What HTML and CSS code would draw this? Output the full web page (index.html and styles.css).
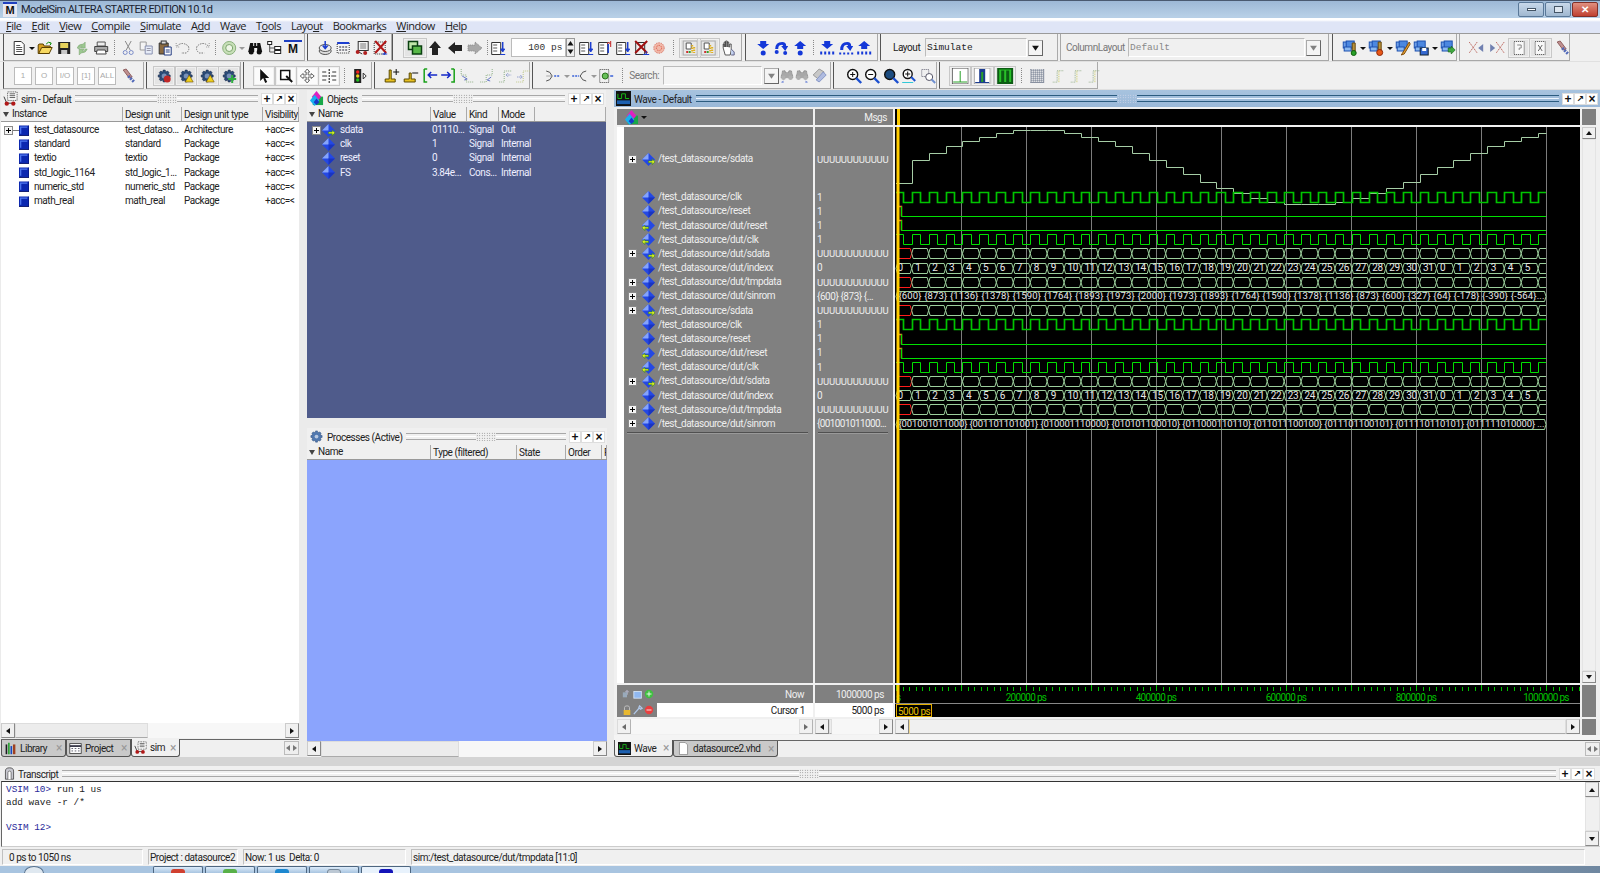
FILE: index.html
```html
<!DOCTYPE html>
<html lang="en">
<head>
<meta charset="utf-8">
<title>ModelSim ALTERA STARTER EDITION 10.1d</title>
<link rel="stylesheet" href="styles.css">
</head>
<body>
<svg class="defs" aria-hidden="true">
<symbol id="doc" viewBox="0 0 16 16"><path d="M3 1.5h7l3 3v10H3z" fill="#fff" stroke="#333"/><path d="M5 5.5h4M5 7.5h6M5 9.5h6M5 11.5h6" stroke="#555"/></symbol>
<symbol id="open" viewBox="0 0 16 16"><path d="M1 5V13.500h11l1-6V6H7L6 4H2z" fill="#d8a020" stroke="#5a4000"/><path d="M1.500 13.500l3-6H15l-3 6z" fill="#f6d860" stroke="#5a4000"/><path d="M9 4q2-3 5-1l-1 2" fill="none" stroke="#080"/></symbol>
<symbol id="save" viewBox="0 0 16 16"><rect x="2" y="2" width="12" height="12" fill="#222"/><rect x="4" y="3" width="8" height="5" fill="#e6d25c"/><rect x="5" y="10" width="6" height="4" fill="#c8c8c8"/></symbol>
<symbol id="reload" viewBox="0 0 16 16"><path d="M3 8q1-4 6-4l2-2v6H6l2-2q-3 0-3 3zM13 9q-1 4-6 4l-2 2V9h5l-2 2q3 0 3-2z" fill="#9cc890" stroke="#7aa070" stroke-width=".5"/></symbol>
<symbol id="print" viewBox="0 0 16 16"><path d="M4 2h8v4H4z" fill="#eee" stroke="#555"/><path d="M1.500 6.500h13v5h-13z" fill="#aaa" stroke="#444"/><path d="M4 10h8l1 4H3z" fill="#fff" stroke="#444"/></symbol>
<symbol id="cut" viewBox="0 0 16 16"><path d="M5 1l5 9M11 1L6 10" stroke="#8a8a8a" fill="none"/><circle cx="5" cy="12.500" r="2" fill="none" stroke="#7a8cc8"/><circle cx="11" cy="12.500" r="2" fill="none" stroke="#7a8cc8"/></symbol>
<symbol id="copy" viewBox="0 0 16 16"><path d="M2 2h6v8H2z" fill="#f4f4f4" stroke="#9a9a9a"/><path d="M7 6h7v8H7z" fill="#e6ecf8" stroke="#8890b0"/><path d="M8.500 8.500h4M8.500 10.500h4" stroke="#99a"/></symbol>
<symbol id="paste" viewBox="0 0 16 16"><path d="M2 3h9v11H2z" fill="#8a6a40" stroke="#333"/><rect x="4" y="1" width="5" height="3" fill="#ddd" stroke="#333"/><path d="M7 7h7v8H7z" fill="#fff" stroke="#223a80"/><path d="M8.500 10h4M8.500 12h4" stroke="#223a80"/></symbol>
<symbol id="undo" viewBox="0 0 16 16"><path d="M2 6q5-5 11 0 2 4-2 7H6" fill="none" stroke="#777" stroke-dasharray="1.500 1"/><path d="M1 3v4h4" fill="none" stroke="#999" stroke-dasharray="1 1"/></symbol>
<symbol id="redo" viewBox="0 0 16 16"><path d="M14 6Q9 1 3 6q-2 4 2 7h5" fill="none" stroke="#777" stroke-dasharray="1.500 1"/><path d="M15 3v4h-4" fill="none" stroke="#999" stroke-dasharray="1 1"/></symbol>
<symbol id="go" viewBox="0 0 16 16"><circle cx="8" cy="8" r="6.500" fill="#c8e0b8" stroke="#8ab07c"/><circle cx="8" cy="8" r="3.500" fill="#eef6e6" stroke="#7ca46c"/></symbol>
<symbol id="bino" viewBox="0 0 16 16"><path d="M3 3h3v3l1 0V3h2v3l1 0V3h3l2 9h-5V8H7v4H1z" fill="#111"/><circle cx="4" cy="12" r="2.500" fill="#111"/><circle cx="12" cy="12" r="2.500" fill="#111"/></symbol>
<symbol id="tree" viewBox="0 0 16 16"><path d="M3.500 4v8h5M3.500 8h5" fill="none" stroke="#555"/><rect x="1.500" y="1.500" width="4" height="3" fill="#fff" stroke="#222"/><rect x="8.500" y="6.500" width="6" height="3" fill="#fff" stroke="#222"/><rect x="8.500" y="10.500" width="6" height="3" fill="#fff" stroke="#222"/></symbol>
<symbol id="cdisk" viewBox="0 0 16 16"><ellipse cx="8" cy="11" rx="6" ry="3.500" fill="#ddd" stroke="#555"/><ellipse cx="8" cy="8" rx="6" ry="3.500" fill="#eee" stroke="#555"/><path d="M8 1v7M5.500 5.500L8 8.500l2.500-3" fill="none" stroke="#1c3ed0" stroke-width="1.500"/></symbol>
<symbol id="cgrid" viewBox="0 0 16 16"><rect x="2" y="3" width="12" height="10" fill="#f4f4f4" stroke="#333" stroke-dasharray="1 1"/><path d="M2 3h12" stroke="#1c3ed0" stroke-width="2"/><path d="M4 7h2M7 7h2M10 7h2M4 10h2M7 10h2M10 10h2" stroke="#223"/></symbol>
<symbol id="cnode" viewBox="0 0 16 16"><rect x="4" y="1.500" width="10" height="9" fill="#f4f4f4" stroke="#333"/><path d="M6 4h6M6 6h6M6 8h6" stroke="#777"/><path d="M3 11L8 14" stroke="#333"/><circle cx="3.500" cy="12" r="2" fill="#b02020"/><circle cx="11" cy="13" r="2" fill="#b02020"/></symbol>
<symbol id="cx" viewBox="0 0 16 16"><rect x="2" y="2" width="11" height="12" fill="#f0f0f0" stroke="#333" stroke-dasharray="1 1"/><path d="M3 1l11 12M14 1L3 13" stroke="#b01818" stroke-width="2"/><path d="M10 14h5M12.500 12v3" stroke="#1c3ed0"/></symbol>
<symbol id="sqs" viewBox="0 0 16 16"><rect x="1.500" y="1.500" width="9" height="8" fill="#bfe6a8" stroke="#0a4010" stroke-width="1.500"/><rect x="5.500" y="6" width="9" height="8" fill="#58b848" stroke="#0a4010" stroke-width="1.500"/></symbol>
<symbol id="up" viewBox="0 0 16 16"><path d="M8 1l6 7h-3v7H5V8H2z" fill="#222"/></symbol>
<symbol id="left" viewBox="0 0 16 16"><path d="M1 8l7-6v3h7v6H8v3z" fill="#222"/></symbol>
<symbol id="right" viewBox="0 0 16 16"><path d="M15 8L8 2v3H1v6h7v3z" fill="#a8a8a8" stroke="#888" stroke-dasharray="1 1"/></symbol>
<symbol id="rundoc" viewBox="0 0 16 16"><path d="M1.500 2.500h9v12h-9z" fill="#fff" stroke="#333"/><path d="M3 5h4M3 8h4M3 11h4" stroke="#555"/><path d="M12.500 2v9" stroke="#1c3ed0" stroke-width="1.500"/><path d="M10.500 9l2 3 2-3z" fill="#1c3ed0" stroke="#1c3ed0"/><path d="M10 14.500h5" stroke="#1c3ed0"/></symbol>
<symbol id="rundocr" viewBox="0 0 16 16"><path d="M1.500 2.500h9v12h-9z" fill="#fff" stroke="#333"/><path d="M3 5h4M3 8h4M3 11h4" stroke="#555"/><path d="M11 4v9" stroke="#1c3ed0" stroke-width="1.500"/><path d="M13.500 1v6" stroke="#c02020"/><path d="M10 4l1.500-2 1.500 2" stroke="#c02020" fill="none"/></symbol>
<symbol id="rundocx" viewBox="0 0 16 16"><path d="M1.500 2.500h9v12h-9z" fill="#eee" stroke="#333"/><path d="M1 1l12 12M13 1L1 13" stroke="#a01010" stroke-width="2"/><path d="M9 14.500h6M12 11v3" stroke="#1c3ed0"/></symbol>
<symbol id="break" viewBox="0 0 16 16"><circle cx="8" cy="8" r="6" fill="#f0b8a8" stroke="#d05848" stroke-dasharray="1 1"/><circle cx="8" cy="8" r="3" fill="none" stroke="#d84030" stroke-dasharray="1 1"/></symbol>
<symbol id="perf" viewBox="0 0 16 16"><rect x="1" y="1" width="14" height="14" fill="#e8e8e8" stroke="#aaa"/><path d="M4 3h5v6H4z" fill="#fff" stroke="#555"/><path d="M10 5v8M12 7v6" stroke="#e0b020" stroke-width="2" stroke-dasharray="1.500 1"/><path d="M5 11v2" stroke="#d03030" stroke-width="2"/><path d="M7.500 11v2" stroke="#30a030" stroke-width="2"/></symbol>
<symbol id="hand" viewBox="0 0 16 16"><path d="M4 8V4h1v3-5h1.500v5-6H8v6-5h1.500v5l1 0V4H12v6l-1 5H6z" fill="#fff" stroke="#333" stroke-width=".8"/><path d="M12 9l3 3v3h-3" fill="#c0d0f0" stroke="#668"/></symbol>
<symbol id="stepin" viewBox="0 0 16 16"><path d="M5 1h6v3h3L8 9 2 4h3z" fill="#1438d8"/><circle cx="8" cy="13" r="2.500" fill="#1438d8"/></symbol>
<symbol id="stepov" viewBox="0 0 16 16"><path d="M2 9q0-7 7-7 4 0 4 4h2l-3 5-4-5h2q-1-2-2-1-3 0-3 4z" fill="#1438d8"/><circle cx="3.500" cy="12" r="2" fill="#1438d8"/><circle cx="12" cy="13" r="2" fill="#1438d8"/></symbol>
<symbol id="stepou" viewBox="0 0 16 16"><path d="M8 1l6 5h-3v3H5V6H2z" fill="#1438d8"/><circle cx="8" cy="13" r="2.500" fill="#1438d8"/></symbol>
<symbol id="stepind" viewBox="0 0 16 16"><path d="M5 1h6v3h3L8 9 2 4h3z" fill="#1438d8"/><path d="M1 11.500h2v3H1zM5 11.500h2v3H5zM9 11.500h2v3H9zM13 11.500h2v3h-2z" fill="#1438d8"/></symbol>
<symbol id="stepovd" viewBox="0 0 16 16"><path d="M2 10q0-8 7-8 4 0 4 4h2l-3 5-4-5h2q-1-2-2-1-3 0-3 5z" fill="#1438d8"/><path d="M1 12.500h2v2H1zM5 12.500h2v2H5zM9 12.500h2v2H9zM13 12.500h2v2h-2z" fill="#1438d8"/></symbol>
<symbol id="stepoud" viewBox="0 0 16 16"><path d="M8 1l6 5h-3v3H5V6H2z" fill="#1438d8"/><path d="M1 11.500h2v3H1zM5 11.500h2v3H5zM9 11.500h2v3H9zM13 11.500h2v3h-2z" fill="#1438d8"/></symbol>
<symbol id="la" viewBox="0 0 16 16"><rect x="1" y="2" width="8" height="6" fill="#6ea0e8" stroke="#1c50b0"/><rect x="4" y="1" width="8" height="7" fill="#4c88e0" stroke="#1c50b0"/><rect x="2" y="7" width="7" height="4" fill="#8ab8f0" stroke="#1c50b0"/></symbol>
<symbol id="lay1" viewBox="0 0 16 16"><use href="#la"/><path d="M10 3h3v8h-3z" fill="#b8923a" stroke="#6a4a10"/><circle cx="11.500" cy="13" r="2.500" fill="#28a028" stroke="#106010"/></symbol>
<symbol id="lay2" viewBox="0 0 16 16"><use href="#la"/><path d="M10 2h3v8h-3z" fill="#b8923a" stroke="#6a4a10"/><circle cx="11.500" cy="12.500" r="3" fill="#e85818" stroke="#902808"/></symbol>
<symbol id="lay3" viewBox="0 0 16 16"><use href="#la"/><path d="M14 2L8 12l-2 3 3-1 6-10z" fill="#e8a030" stroke="#805010"/></symbol>
<symbol id="lay4" viewBox="0 0 16 16"><use href="#la"/><rect x="7" y="8" width="8" height="7" fill="#3468d0" stroke="#123"/><rect x="9" y="8" width="4" height="3" fill="#fff"/></symbol>
<symbol id="lay5" viewBox="0 0 16 16"><use href="#la"/><path d="M8 8h3V6l4 4-4 4v-2H8z" fill="#40a840" stroke="#106010" stroke-width=".6"/></symbol>
<symbol id="xl" viewBox="0 0 16 16"><path d="M1 2l8 11M9 2L1 13" stroke="#c07068" stroke-dasharray="1.500 .6"/><path d="M15 4l-5 4 5 4z" fill="#7080b0"/></symbol>
<symbol id="xr" viewBox="0 0 16 16"><path d="M7 2l8 11M15 2L7 13" stroke="#c07068" stroke-dasharray="1.500 .6"/><path d="M1 4l5 4-5 4z" fill="#7080b0"/></symbol>
<symbol id="dotbox" viewBox="0 0 16 16"><rect x="3" y="1.500" width="10" height="13" fill="#f8f8f8" stroke="#444" stroke-dasharray="1 1"/><path d="M6 5h4v3H8v2" fill="none" stroke="#888"/></symbol>
<symbol id="dotboxx" viewBox="0 0 16 16"><rect x="3" y="1.500" width="10" height="13" fill="#f8f8f8" stroke="#444" stroke-dasharray="1 1"/><path d="M6 5l4 6M10 5l-4 6" stroke="#666"/></symbol>
<symbol id="pen" viewBox="0 0 16 16"><path d="M3 2l6 8 3-1-6-8z" fill="#c09090" stroke="#906060"/><path d="M8 8l6 6" stroke="#5068b8" stroke-width="3" stroke-dasharray="2 1"/></symbol>
<symbol id="gear" viewBox="0 0 16 16"><path d="M7 0h2l.5 2 2-.9 1.400 1.400-.9 2 2 .5v2l-2 .5.900 2-1.400 1.400-2-.9L9 12H7l-.5-2-2 .9-1.400-1.400.9-2-2-.5v-2l2-.5-.9-2 1.400-1.400 2 .9z" transform="translate(0 2)" fill="#2c4c78" stroke="#102040" stroke-width=".5"/><circle cx="8" cy="8" r="2.500" fill="#7890b8"/></symbol>
<symbol id="gearr" viewBox="0 0 16 16"><use href="#gear"/><circle cx="11" cy="11" r="3.500" fill="#c02828"/></symbol>
<symbol id="geary" viewBox="0 0 16 16"><use href="#gear"/><path d="M11 7l4 7H7z" fill="#f0d020" stroke="#705000" stroke-width=".6"/></symbol>
<symbol id="gearg" viewBox="0 0 16 16"><use href="#gear"/><path d="M12 7v3h3v2h-3v3h-2v-3H7v-2h3V7z" fill="#30b040"/></symbol>
<symbol id="ptr" viewBox="0 0 16 16"><path d="M4 1v12l3-3 2 5 2-1-2-4h4z" fill="#111"/></symbol>
<symbol id="zbox" viewBox="0 0 16 16"><rect x="2.500" y="2.500" width="9" height="9" fill="#fff" stroke="#111" stroke-width="1.500"/><path d="M8 8l6 6" stroke="#111" stroke-width="2"/></symbol>
<symbol id="mv" viewBox="0 0 16 16"><path d="M8 1l2.500 3H9v3h3V5.500L15 8l-3 2.500V9H9v3h1.500L8 15l-2.500-3H7V9H4v1.500L1 8l3-2.500V7h3V4H5.500z" fill="#fff" stroke="#666"/></symbol>
<symbol id="spl" viewBox="0 0 16 16"><path d="M8 1v14" stroke="#111" stroke-dasharray="2 1"/><path d="M1 4h4M1 8h5M1 12h4M11 4h4M10 8h5M11 12h4" stroke="#333"/></symbol>
<symbol id="light" viewBox="0 0 16 16"><rect x="2" y="1" width="7" height="14" fill="#222"/><circle cx="5.500" cy="4" r="1.700" fill="#f02020"/><circle cx="5.500" cy="8" r="1.700" fill="#f0d020"/><circle cx="5.500" cy="12" r="1.700" fill="#20c020"/><path d="M11 5l3 3-3 3z" fill="#fff" stroke="#333"/></symbol>
<symbol id="yc1" viewBox="0 0 16 16"><path d="M1 14h10v-3H7V2H5v9H1z" fill="#e8c020" stroke="#5a4a00"/><path d="M12 1v6M9 4h6" stroke="#111"/></symbol>
<symbol id="yc2" viewBox="0 0 16 16"><path d="M1 14h11v-3H8V5H6v6H1z" fill="#e8c020" stroke="#5a4a00"/><path d="M9 5h6" stroke="#111"/></symbol>
<symbol id="gbl" viewBox="0 0 16 16"><path d="M2 1v13h3M2 1h3" fill="none" stroke="#18a018" stroke-width="1.500"/><path d="M6 7h9M9 4L6 7l3 3" fill="none" stroke="#1428c8" stroke-width="1.500"/></symbol>
<symbol id="gbr" viewBox="0 0 16 16"><path d="M14 1v13h-3M14 1h-3" fill="none" stroke="#18a018" stroke-width="1.500"/><path d="M1 7h9M7 4l3 3-3 3" fill="none" stroke="#1428c8" stroke-width="1.500"/></symbol>
<symbol id="ed1" viewBox="0 0 16 16"><path d="M2 1v6h5v7h7" fill="none" stroke="#90b088" stroke-dasharray="1 1"/><path d="M3 8l5 3-3 1" fill="none" stroke="#6878c8"/></symbol>
<symbol id="ed2" viewBox="0 0 16 16"><path d="M2 14h6V7h6V1" fill="none" stroke="#90b088" stroke-dasharray="1 1"/><path d="M13 9l-4 3 3 1" fill="none" stroke="#6878c8"/></symbol>
<symbol id="ed3" viewBox="0 0 16 16"><path d="M2 14h5V3h7" fill="none" stroke="#90b088" stroke-dasharray="1 1"/><path d="M9 7h5M11 5l-2 2 2 2" fill="none" stroke="#8090c8" stroke-dasharray="1 .6"/></symbol>
<symbol id="ed4" viewBox="0 0 16 16"><path d="M1 14h7V3h7" fill="none" stroke="#c0c888" stroke-dasharray="1 1"/><path d="M2 9h5M5 7l2 2-2 2" fill="none" stroke="#8090c8" stroke-dasharray="1 .6"/></symbol>
<symbol id="mrg1" viewBox="0 0 16 16"><path d="M1 3q4 0 6 5-2 5-6 5" fill="none" stroke="#555"/><path d="M1 8h5" stroke="#aaa"/><path d="M9 8h6" stroke="#3860d8" stroke-width="1.500" stroke-dasharray="2 1"/></symbol>
<symbol id="mrg2" viewBox="0 0 16 16"><path d="M15 3q-4 0-6 5 2 5 6 5" fill="none" stroke="#555"/><path d="M1 8h7" stroke="#3860d8" stroke-width="1.500" stroke-dasharray="2 1"/></symbol>
<symbol id="mrg3" viewBox="0 0 16 16"><rect x="1.500" y="1.500" width="9" height="13" fill="none" stroke="#444" stroke-dasharray="1 1"/><circle cx="7" cy="8" r="3" fill="#68c058" stroke="#287018"/><path d="M12 8h3" stroke="#3860d8" stroke-width="1.500"/></symbol>
<symbol id="fnd1" viewBox="0 0 16 16"><path d="M3 2h3v2h4V2h3l2 8H1z" fill="#a8a8a8" stroke="#888" stroke-dasharray="1 .6"/><circle cx="4" cy="10" r="2.500" fill="#b0b0b0"/><circle cx="12" cy="10" r="2.500" fill="#b0b0b0"/><path d="M1 15l3-2v3z" fill="#7088d8"/></symbol>
<symbol id="fnd2" viewBox="0 0 16 16"><path d="M3 2h3v2h4V2h3l2 8H1z" fill="#a8a8a8" stroke="#888" stroke-dasharray="1 .6"/><circle cx="4" cy="10" r="2.500" fill="#b0b0b0"/><circle cx="12" cy="10" r="2.500" fill="#b0b0b0"/><path d="M15 15l-3-2v3z" fill="#7088d8"/></symbol>
<symbol id="fnd3" viewBox="0 0 16 16"><path d="M2 7l6-6 5 3-6 7z" fill="#c8c8c8" stroke="#999"/><path d="M5 12l7-8 3 3-7 7z" fill="#b0bce0" stroke="#8898c8"/></symbol>
<symbol id="zin" viewBox="0 0 16 16"><circle cx="6.500" cy="6.500" r="5" fill="#fff" stroke="#111" stroke-width="1.400"/><path d="M4 6.500h5M6.500 4v5" stroke="#111"/><path d="M10 10l5 5" stroke="#1c50d0" stroke-width="2.400"/></symbol>
<symbol id="zout" viewBox="0 0 16 16"><circle cx="6.500" cy="6.500" r="5" fill="#fff" stroke="#111" stroke-width="1.400"/><path d="M4 6.500h5" stroke="#111"/><path d="M10 10l5 5" stroke="#1c50d0" stroke-width="2.400"/></symbol>
<symbol id="zfull" viewBox="0 0 16 16"><circle cx="6.500" cy="6.500" r="5" fill="#1c4c80" stroke="#111" stroke-width="1.400"/><path d="M10 10l5 5" stroke="#1c50d0" stroke-width="2.400"/></symbol>
<symbol id="zcur" viewBox="0 0 16 16"><circle cx="6.500" cy="6" r="4.500" fill="#fff" stroke="#111" stroke-width="1.400"/><path d="M4 6h5M6.500 3.500v5" stroke="#111"/><path d="M10 9l4 4" stroke="#1c50d0" stroke-width="2"/><path d="M1 14.500h11" stroke="#30c8d8"/></symbol>
<symbol id="zsel" viewBox="0 0 16 16"><rect x="1.500" y="1.500" width="7" height="7" fill="none" stroke="#667" stroke-dasharray="1 1"/><circle cx="9" cy="9" r="3.500" fill="#fff" stroke="#556"/><path d="M11.500 11.500l3.500 3.500" stroke="#7090d0" stroke-width="2"/></symbol>
<symbol id="v1" viewBox="0 0 16 16"><rect x="0" y="0" width="16" height="16" fill="#fff" stroke="#444"/><path d="M8 3v11M1 14h14" stroke="#28a028"/></symbol>
<symbol id="v2" viewBox="0 0 16 16"><rect x="0" y="0" width="16" height="16" fill="#fff" stroke="#999"/><rect x="5" y="1" width="6" height="13" fill="#1c3c90"/><rect x="7" y="4" width="2" height="10" fill="#28a028"/><path d="M1 14.500h14" stroke="#1c3c90"/></symbol>
<symbol id="v3" viewBox="0 0 16 16"><rect x="0" y="0" width="16" height="16" fill="#0c5c14"/><path d="M3 2v12M8 2v12M13 2v12" stroke="#28c028" stroke-width="2"/><path d="M2 2h12" stroke="#28c028"/></symbol>
<symbol id="hatch" viewBox="0 0 16 16"><rect x="1" y="1" width="14" height="14" fill="#8890a0"/><path d="M1 3h14M1 5h14M1 7h14M1 9h14M1 11h14M1 13h14M3 1v14M5 1v14M7 1v14M9 1v14M11 1v14M13 1v14" stroke="#f0f0f0" stroke-dasharray="1 1"/></symbol>
<symbol id="edgd" viewBox="0 0 16 16"><path d="M2 15h5V2h7" fill="none" stroke="#8aa880" stroke-dasharray="1 1"/><path d="M9 2v13" stroke="#c8c850" stroke-dasharray="1 1"/></symbol>
<symbol id="plus" viewBox="0 0 9 9"><rect x=".5" y=".5" width="8" height="8" fill="#f4f4f4" stroke="#8a8a8a"/><path d="M2 4.500h5M4.500 2v5" stroke="#000"/></symbol>
<symbol id="dia" viewBox="0 0 14 14"><path d="M7 0l7 7-7 7-7-7z" fill="#2448e4"/><path d="M7 0L0 7h7z" fill="#86a4fa"/><path d="M7 14l7-7H7z" fill="#1a34c0"/></symbol>
<symbol id="diao" viewBox="0 0 14 14"><path d="M7 0l7 7-7 7-7-7z" fill="#2448e4"/><path d="M7 0L0 7h7z" fill="#86a4fa"/><path d="M7 8.500h4V6.500l3 3-3 3v-2H7z" fill="#d8f020" stroke="#308018" stroke-width=".6"/></symbol>
<symbol id="diai" viewBox="0 0 14 14"><path d="M7 0l7 7-7 7-7-7z" fill="#2448e4"/><path d="M7 0L0 7h7z" fill="#86a4fa"/><path d="M7 8.500H3V6.500l-3 3 3 3v-2h4z" fill="#d8f020" stroke="#308018" stroke-width=".6"/></symbol>
<symbol id="inst" viewBox="0 0 12 12"><rect x="0" y="0" width="12" height="12" fill="#0c28b0"/><path d="M2 10V2h8" fill="none" stroke="#5078f0" stroke-width="1.500"/><path d="M12 0v12H0" fill="none" stroke="#000a60"/></symbol>
<symbol id="simi" viewBox="0 0 16 16"><rect x="5" y="1" width="10" height="9" fill="#fff" stroke="#333" stroke-dasharray="1 1"/><path d="M7 3h6M7 5h6M7 7h6" stroke="#555"/><path d="M1 6l3 7h7" fill="none" stroke="#333"/><circle cx="4" cy="13.500" r="2.300" fill="#b01818"/><circle cx="11" cy="13.500" r="2.300" fill="#b01818"/></symbol>
<symbol id="obji" viewBox="0 0 16 16"><path d="M4 6h11v9H4z" fill="#18a848"/><path d="M8 0l5 6-5 6-5-6z" fill="#e020c0"/><path d="M6 4l5 6-5 6-5-6z" fill="#18b0f0"/><path d="M8 8l3 4-3 3-3-3z" fill="#1838c8"/></symbol>
<symbol id="proci" viewBox="0 0 16 16"><path d="M7 0h2l.5 2 2-.9 1.400 1.400-.9 2 2 .5v2l-2 .5.900 2-1.400 1.400-2-.9L9 12H7l-.5-2-2 .9-1.400-1.400.9-2-2-.5v-2l2-.5-.9-2 1.400-1.400 2 .9z" transform="translate(0 2)" fill="#5078b0" stroke="#284878" stroke-width=".5"/><circle cx="8" cy="8" r="2" fill="#b8c8e0"/></symbol>
<symbol id="wavei" viewBox="0 0 16 16"><rect x="0" y="0" width="16" height="16" fill="#111"/><path d="M2 3v5h4V3h4v5h4" fill="none" stroke="#18c018"/><rect x="1" y="10" width="14" height="4" fill="#1c60b0"/></symbol>
<symbol id="trani" viewBox="0 0 16 16"><path d="M3 15V5q0-4 5-4t5 4v10z" fill="#c8c8d0" stroke="#444"/><path d="M6 15V7q0-2 2-2t2 2v8" fill="#fff" stroke="#666"/></symbol>
<symbol id="libi" viewBox="0 0 16 16"><path d="M2 3h2v12H2z" fill="#1c1c20"/><path d="M5 1h2v14H5z" fill="#28a030"/><path d="M8 5h2v10H8z" fill="#1848c0"/><path d="M11 3h3v12h-3z" fill="#a04020"/></symbol>
<symbol id="proji" viewBox="0 0 16 16"><rect x="1" y="2" width="14" height="12" fill="#fff" stroke="#333"/><path d="M1 5h14" stroke="#223" stroke-width="2"/><path d="M3 8h2M7 8h2M11 8h2M3 11h2M7 11h2M11 11h2" stroke="#445"/></symbol>
<symbol id="pagei" viewBox="0 0 16 16"><path d="M3 .5h7l3 3v12H3z" fill="#fff" stroke="#888"/></symbol>
<symbol id="mini" viewBox="0 0 12 12"><path d="M6 1l3 3H7v3H5V4H3z" fill="#aab"/><rect x="1" y="4" width="5" height="6" fill="#9ab"/></symbol>
<symbol id="nowp" viewBox="0 0 12 12"><rect x="1" y="3" width="9" height="8" fill="#90b8f0" stroke="#d8e8f8"/></symbol>
<symbol id="nowa" viewBox="0 0 12 12"><circle cx="6" cy="6" r="5" fill="#40c040"/><path d="M3 6h6M6 3v6" stroke="#fff"/></symbol>
<symbol id="lock" viewBox="0 0 12 12"><path d="M3 6V3q0-2 3-2t3 2v3" fill="none" stroke="#c8c8c8"/><rect x="2" y="6" width="8" height="6" fill="#e8b830"/></symbol>
<symbol id="wren" viewBox="0 0 12 12"><path d="M1 11l7-8M8 1l3 3-2 1-2-2z" stroke="#b0c8e8" fill="none" stroke-width="1.500"/></symbol>
<symbol id="nowm" viewBox="0 0 12 12"><circle cx="6" cy="6" r="5" fill="#e84040"/><path d="M3 6h6" stroke="#fff"/></symbol>
<symbol id="arw" viewBox="0 0 7 7"><path d="M3.500 1L6.500 5.500h-6z" fill="#111"/></symbol>
</svg>

<header class="titlebar">
  <span class="logo"><b>M</b></span>
  <span class="title-text">ModelSim ALTERA STARTER EDITION 10.1d</span>
  <span class="winbtns">
    <span class="wb"><i class="glyph-min"></i></span>
    <span class="wb"><i class="glyph-max"></i></span>
    <span class="wb wb-close">✕</span>
  </span>
</header>

<nav class="menubar">
  <span><u>F</u>ile</span><span><u>E</u>dit</span><span><u>V</u>iew</span><span><u>C</u>ompile</span><span><u>S</u>imulate</span><span>A<u>d</u>d</span><span>W<u>a</u>ve</span><span>T<u>o</u>ols</span><span>Layo<u>u</u>t</span><span>Bookmar<u>k</u>s</span><span><u>W</u>indow</span><span><u>H</u>elp</span>
</nav>

<section class="toolrow">
  <div class="tg tg-a">
    <svg class="ic"><use href="#doc"/></svg><i class="caret"></i>
    <svg class="ic"><use href="#open"/></svg><svg class="ic"><use href="#save"/></svg><svg class="ic"><use href="#reload"/></svg><svg class="ic"><use href="#print"/></svg><i class="sep"></i>
    <svg class="ic"><use href="#cut"/></svg><svg class="ic"><use href="#copy"/></svg><svg class="ic"><use href="#paste"/></svg><svg class="ic"><use href="#undo"/></svg><svg class="ic"><use href="#redo"/></svg><i class="sep"></i>
    <svg class="ic"><use href="#go"/></svg><i class="caret caret-off"></i><svg class="ic"><use href="#bino"/></svg><svg class="ic"><use href="#tree"/></svg><span class="mlogo">M</span>
  </div>
  <div class="tg tg-b">
    <svg class="ic"><use href="#cdisk"/></svg><svg class="ic"><use href="#cgrid"/></svg><svg class="ic"><use href="#cnode"/></svg><svg class="ic"><use href="#cx"/></svg>
  </div>
  <div class="tg tg-c">
    <svg class="ic ic-on ic-w"><use href="#sqs"/></svg><svg class="ic ic-w"><use href="#up"/></svg><svg class="ic ic-w"><use href="#left"/></svg><svg class="ic ic-w"><use href="#right"/></svg><i class="sep sep-s"></i>
    <svg class="ic"><use href="#rundoc"/></svg>
    <span class="runlen">100 ps</span><span class="spin"><svg><use href="#arw"/></svg><svg class="flip"><use href="#arw"/></svg></span>
    <svg class="ic"><use href="#rundoc"/></svg><svg class="ic"><use href="#rundocr"/></svg><svg class="ic"><use href="#rundoc"/></svg><svg class="ic"><use href="#rundocx"/></svg><svg class="ic ic-s"><use href="#break"/></svg><i class="sep sep-l"></i>
    <svg class="ic ic-on"><use href="#perf"/></svg><svg class="ic ic-on"><use href="#perf"/></svg><svg class="ic"><use href="#hand"/></svg>
  </div>
  <div class="tg tg-d">
    <svg class="ic"><use href="#stepin"/></svg><svg class="ic"><use href="#stepov"/></svg><svg class="ic"><use href="#stepou"/></svg><i class="sep"></i>
    <svg class="ic"><use href="#stepind"/></svg><svg class="ic"><use href="#stepovd"/></svg><svg class="ic"><use href="#stepoud"/></svg>
  </div>
  <div class="tg tg-e">
    <span class="lbl">Layout</span><span class="combo c-layout">Simulate</span><span class="cbtn"><svg class="flip"><use href="#arw"/></svg></span>
  </div>
  <div class="tg tg-f">
    <span class="lbl off">ColumnLayout</span><span class="combo c-col off">Default</span><span class="cbtn off"><svg class="flip"><use href="#arw"/></svg></span>
  </div>
  <div class="tg tg-g">
    <svg class="ic"><use href="#lay1"/></svg><i class="caret"></i><svg class="ic"><use href="#lay2"/></svg><i class="caret"></i><svg class="ic"><use href="#lay3"/></svg><svg class="ic"><use href="#lay4"/></svg><i class="caret"></i><svg class="ic"><use href="#lay5"/></svg>
  </div>
  <div class="tg tg-h">
    <svg class="ic"><use href="#xl"/></svg><svg class="ic"><use href="#xr"/></svg><svg class="ic ic-on"><use href="#dotbox"/></svg><svg class="ic ic-on"><use href="#dotboxx"/></svg><svg class="ic"><use href="#pen"/></svg>
  </div>
</section>

<section class="toolrow">
  <div class="tg tg-i">
    <span class="fbox">1</span><span class="fbox">O</span><span class="fbox">I/O</span><span class="fbox">[1]</span><span class="fbox">ALL</span><svg class="ic"><use href="#pen"/></svg>
  </div>
  <div class="tg tg-j">
    <svg class="ic ic-on"><use href="#gearr"/></svg><svg class="ic ic-on"><use href="#geary"/></svg><svg class="ic ic-on"><use href="#geary"/></svg><svg class="ic ic-on"><use href="#gearg"/></svg>
  </div>
  <div class="tg tg-k">
    <svg class="ic ic-on"><use href="#ptr"/></svg><svg class="ic ic-on"><use href="#zbox"/></svg><svg class="ic ic-on"><use href="#mv"/></svg><svg class="ic ic-on"><use href="#spl"/></svg><i class="sep"></i><svg class="ic"><use href="#light"/></svg>
  </div>
  <div class="tg tg-l">
    <svg class="ic"><use href="#yc1"/></svg><svg class="ic"><use href="#yc2"/></svg><svg class="ic"><use href="#gbl"/></svg><svg class="ic"><use href="#gbr"/></svg><svg class="ic"><use href="#ed1"/></svg><svg class="ic"><use href="#ed2"/></svg><svg class="ic"><use href="#ed3"/></svg><svg class="ic"><use href="#ed4"/></svg>
  </div>
  <div class="tg tg-m">
    <svg class="ic"><use href="#mrg1"/></svg><i class="caret caret-off"></i><svg class="ic"><use href="#mrg2"/></svg><i class="caret caret-off"></i><svg class="ic"><use href="#mrg3"/></svg><i class="sep"></i>
    <span class="lbl off">Search:</span><span class="combo c-search"></span><span class="cbtn off"><svg class="flip"><use href="#arw"/></svg></span>
    <svg class="ic ic-t"><use href="#fnd1"/></svg><svg class="ic ic-t"><use href="#fnd2"/></svg><svg class="ic"><use href="#fnd3"/></svg>
  </div>
  <div class="tg tg-n">
    <svg class="ic"><use href="#zin"/></svg><svg class="ic"><use href="#zout"/></svg><svg class="ic"><use href="#zfull"/></svg><svg class="ic"><use href="#zcur"/></svg><svg class="ic"><use href="#zsel"/></svg>
  </div>
  <div class="tg tg-o">
    <svg class="ic ic-on"><use href="#v1"/></svg><svg class="ic ic-on"><use href="#v2"/></svg><svg class="ic ic-on"><use href="#v3"/></svg><i class="sep"></i><svg class="ic"><use href="#hatch"/></svg><svg class="ic ic-t"><use href="#edgd"/></svg><svg class="ic ic-t"><use href="#edgd"/></svg><svg class="ic ic-t"><use href="#edgd"/></svg>
  </div>
</section>

<main class="workspace">
  <div class="col col-sim">
    <section class="panel panel-sim">
      <div class="phead">
        <svg class="pi"><use href="#simi"/></svg><span class="ptitle">sim - Default</span>
        <span class="stripes"><i></i><b></b><i></i></span>
        <span class="pbtns"><span>+</span><span class="und">↗</span><span>×</span></span>
      </div>
      <div class="chead chead-sim"><span class="fcell"><i class="tri"></i>Instance</span><span>Design unit</span><span>Design unit type</span><span>Visibility</span></div>
      <div class="pbody body-white">
        <div class="row row-sim"><span class="tree"><svg class="pm"><use href="#plus"/></svg><i class="conn"></i><svg class="inst"><use href="#inst"/></svg>test_datasource</span><span>test_dataso...</span><span>Architecture</span><span>+acc=&lt;</span></div>
        <div class="row row-sim"><span class="tree tree-n"><svg class="inst"><use href="#inst"/></svg>standard</span><span>standard</span><span>Package</span><span>+acc=&lt;</span></div>
        <div class="row row-sim"><span class="tree tree-n"><svg class="inst"><use href="#inst"/></svg>textio</span><span>textio</span><span>Package</span><span>+acc=&lt;</span></div>
        <div class="row row-sim"><span class="tree tree-n"><svg class="inst"><use href="#inst"/></svg>std_logic_1164</span><span>std_logic_1...</span><span>Package</span><span>+acc=&lt;</span></div>
        <div class="row row-sim"><span class="tree tree-n"><svg class="inst"><use href="#inst"/></svg>numeric_std</span><span>numeric_std</span><span>Package</span><span>+acc=&lt;</span></div>
        <div class="row row-sim"><span class="tree tree-n"><svg class="inst"><use href="#inst"/></svg>math_real</span><span>math_real</span><span>Package</span><span>+acc=&lt;</span></div>
      </div>
      <div class="hs hs-sim"><span class="sb"><i class="ar-l"></i></span><span class="thumb"></span><span class="trk"></span><span class="sb"><i class="ar-r"></i></span></div>
      <div class="tabs">
        <span class="tab"><svg><use href="#libi"/></svg>Library<em>×</em></span>
        <span class="tab"><svg><use href="#proji"/></svg>Project<em>×</em></span>
        <span class="tab tab-on"><svg><use href="#simi"/></svg>sim<em>×</em></span>
        <span class="tabnav"><i class="ar-l"></i><i class="ar-r"></i></span>
      </div>
    </section>
  </div>

  <div class="col col-mid">
    <section class="panel panel-obj">
      <div class="phead">
        <svg class="pi"><use href="#obji"/></svg><span class="ptitle">Objects</span>
        <span class="stripes"><i></i><b></b><i></i></span>
        <span class="pbtns"><span>+</span><span class="und">↗</span><span>×</span></span>
      </div>
      <div class="chead chead-obj"><span class="fcell"><i class="tri"></i>Name</span><span>Value</span><span>Kind</span><span>Mode</span><span></span></div>
      <div class="pbody body-obj">
        <div class="row row-obj"><span class="tree tree-o"><svg class="pm"><use href="#plus"/></svg><svg class="dia"><use href="#diao"/></svg>sdata</span><span>01110...</span><span>Signal</span><span>Out</span></div>
        <div class="row row-obj"><span class="tree tree-o tree-on"><svg class="dia"><use href="#dia"/></svg>clk</span><span>1</span><span>Signal</span><span>Internal</span></div>
        <div class="row row-obj"><span class="tree tree-o tree-on"><svg class="dia"><use href="#dia"/></svg>reset</span><span>0</span><span>Signal</span><span>Internal</span></div>
        <div class="row row-obj"><span class="tree tree-o tree-on"><svg class="dia"><use href="#dia"/></svg>FS</span><span>3.84e...</span><span>Cons...</span><span>Internal</span></div>
      </div>
    </section>
    <section class="panel panel-proc">
      <div class="phead">
        <svg class="pi"><use href="#proci"/></svg><span class="ptitle">Processes (Active)</span>
        <span class="stripes"><i></i><b></b><i></i></span>
        <span class="pbtns"><span>+</span><span class="und">↗</span><span>×</span></span>
      </div>
      <div class="chead chead-proc"><span class="fcell"><i class="tri"></i>Name</span><span>Type (filtered)</span><span>State</span><span>Order</span><span>P</span></div>
      <div class="pbody body-proc"></div>
      <div class="hs hs-proc"><span class="sb"><i class="ar-l"></i></span><span class="thumb"></span><span class="trk"></span><span class="sb"><i class="ar-r"></i></span></div>
    </section>
  </div>

  <div class="col col-wave">
    <section class="panel panel-wave">
      <div class="phead phead-on">
        <svg class="pi"><use href="#wavei"/></svg><span class="ptitle">Wave - Default</span>
        <span class="stripes"><i></i><b></b><i></i></span>
        <span class="pbtns"><span>+</span><span class="und">↗</span><span>×</span></span>
      </div>
      <div class="wave-grid">
        <div class="wtop wtop-name"><svg class="wobj"><use href="#obji"/></svg><i class="caret"></i></div>
        <div class="wtop wtop-msg">Msgs</div>
        <div class="wtop-wave"><i class="cursor-mark"></i></div>
        <div class="grey-cell"></div>

        <div class="names">
          <div class="sig sig-big"><svg class="pm"><use href="#plus"/></svg><i class="conn"></i><svg class="dia"><use href="#diao"/></svg><span>/test_datasource/sdata</span></div>
          <div class="sig"><svg class="dia dia-n"><use href="#dia"/></svg><span>/test_datasource/clk</span></div>
          <div class="sig"><svg class="dia dia-n"><use href="#dia"/></svg><span>/test_datasource/reset</span></div>
          <div class="sig"><svg class="dia dia-n"><use href="#diai"/></svg><span>/test_datasource/dut/reset</span></div>
          <div class="sig"><svg class="dia dia-n"><use href="#diai"/></svg><span>/test_datasource/dut/clk</span></div>
          <div class="sig"><svg class="pm"><use href="#plus"/></svg><i class="conn"></i><svg class="dia"><use href="#diao"/></svg><span>/test_datasource/dut/sdata</span></div>
          <div class="sig"><svg class="dia dia-n"><use href="#dia"/></svg><span>/test_datasource/dut/indexx</span></div>
          <div class="sig"><svg class="pm"><use href="#plus"/></svg><i class="conn"></i><svg class="dia"><use href="#dia"/></svg><span>/test_datasource/dut/tmpdata</span></div>
          <div class="sig"><svg class="pm"><use href="#plus"/></svg><i class="conn"></i><svg class="dia"><use href="#dia"/></svg><span>/test_datasource/dut/sinrom</span></div>
          <div class="sig"><svg class="pm"><use href="#plus"/></svg><i class="conn"></i><svg class="dia"><use href="#diao"/></svg><span>/test_datasource/sdata</span></div>
          <div class="sig"><svg class="dia dia-n"><use href="#dia"/></svg><span>/test_datasource/clk</span></div>
          <div class="sig"><svg class="dia dia-n"><use href="#dia"/></svg><span>/test_datasource/reset</span></div>
          <div class="sig"><svg class="dia dia-n"><use href="#diai"/></svg><span>/test_datasource/dut/reset</span></div>
          <div class="sig"><svg class="dia dia-n"><use href="#diai"/></svg><span>/test_datasource/dut/clk</span></div>
          <div class="sig"><svg class="pm"><use href="#plus"/></svg><i class="conn"></i><svg class="dia"><use href="#diao"/></svg><span>/test_datasource/dut/sdata</span></div>
          <div class="sig"><svg class="dia dia-n"><use href="#dia"/></svg><span>/test_datasource/dut/indexx</span></div>
          <div class="sig"><svg class="pm"><use href="#plus"/></svg><i class="conn"></i><svg class="dia"><use href="#dia"/></svg><span>/test_datasource/dut/tmpdata</span></div>
          <div class="sig"><svg class="pm"><use href="#plus"/></svg><i class="conn"></i><svg class="dia"><use href="#dia"/></svg><span>/test_datasource/dut/sinrom</span></div>
          <div class="divider"></div>
        </div>
        <div class="vals">
          <div class="val val-big val-u">UUUUUUUUUUUU</div>
          <div class="val">1</div><div class="val">1</div><div class="val">1</div><div class="val">1</div>
          <div class="val val-u">UUUUUUUUUUUU</div><div class="val">0</div><div class="val val-u">UUUUUUUUUUUU</div><div class="val">{600} {873} {...</div>
          <div class="val val-u">UUUUUUUUUUUU</div>
          <div class="val">1</div><div class="val">1</div><div class="val">1</div><div class="val">1</div>
          <div class="val val-u">UUUUUUUUUUUU</div><div class="val">0</div><div class="val val-u">UUUUUUUUUUUU</div><div class="val val-n">{001001011000...</div>
          <div class="divider"></div>
        </div>
        <svg id="wave" class="wave" viewBox="895 127 685 556"></svg>
        <div class="vs"><span class="sb sb-v"><i class="ar-u"></i></span><span class="vthumb"></span><span class="sb sb-v"><i class="ar-d"></i></span></div>

        <div class="cur-name">
          <div class="cur-now"><span class="mini-ics"><svg><use href="#mini"/></svg><svg><use href="#nowp"/></svg><svg><use href="#nowa"/></svg></span><span>Now</span></div>
          <div class="cur-one"><span class="mini-ics mini-grey"><svg><use href="#lock"/></svg><svg><use href="#wren"/></svg><svg><use href="#nowm"/></svg></span><span class="cur-label">Cursor 1</span></div>
        </div>
        <div class="cur-val">
          <div class="cur-now">1000000 ps</div>
          <div class="cur-one cur-one-v">5000 ps</div>
        </div>
        <svg id="axis" class="axis" viewBox="895 685 685 32"></svg>
        <div class="grey-cell"></div>

        <div class="hs hs-fade"><span class="sb"><i class="ar-l"></i></span><span class="trk"></span><span class="sb"><i class="ar-r"></i></span></div>
        <div class="hs hs-val"><span class="sb"><i class="ar-l"></i></span><span class="thumb"></span><span class="trk"></span><span class="sb"><i class="ar-r"></i></span></div>
        <div class="hs hs-main"><span class="sb"><i class="ar-l"></i></span><span class="thumb"></span><span class="sb"><i class="ar-r"></i></span></div>
        <div class="grey-cell"></div>
      </div>
      <div class="tabs tabs-wave">
        <span class="tab tab-on"><svg><use href="#wavei"/></svg>Wave<em>×</em></span>
        <span class="tab"><svg><use href="#pagei"/></svg>datasource2.vhd<em>×</em></span>
        <span class="tabnav"><i class="ar-l"></i><i class="ar-r"></i></span>
      </div>
    </section>
  </div>
</main>

<section class="transcript">
  <div class="phead">
    <svg class="pi"><use href="#trani"/></svg><span class="ptitle">Transcript</span>
    <span class="stripes stripes-t"><i></i><b></b><i></i></span>
    <span class="pbtns"><span>+</span><span class="und">↗</span><span>×</span></span>
  </div>
  <div class="tr-body">
    <pre class="console"><span class="prompt">VSIM 10&gt;</span> run 1 us
add wave -r /*

<span class="prompt">VSIM 12&gt;</span></pre>
    <div class="vs vs-tr"><span class="sb sb-v"><i class="ar-u"></i></span><span class="vthumb"></span><span class="sb sb-v"><i class="ar-d"></i></span></div>
  </div>
</section>

<footer class="statusbar">
  <span class="st st-1">0 ps to 1050 ns</span>
  <span class="st st-2">Project : datasource2</span>
  <span class="st st-3">Now: 1 us&nbsp; Delta: 0</span>
  <span class="st st-4">sim:/test_datasource/dut/tmpdata [11:0]</span>
</footer>

<div class="taskbar">
  <i class="orb"></i>
  <span class="task"><i class="t-red"></i></span><span class="task"><i class="t-green"></i></span><span class="task"><i class="t-blue"></i></span><span class="task"><i class="t-grey"></i></span><span class="task task-on"><i class="t-navy"></i></span>
</div>
<script src="wave.js"></script>
</body>
</html>
```
FILE: styles.css
```css
*{box-sizing:border-box}
html,body{margin:0;padding:0}
body{width:1600px;height:873px;overflow:hidden;display:flex;flex-direction:column;background:#f0f0f0;font:10px Roboto,"Liberation Sans",Arial,sans-serif;letter-spacing:-.45px;color:#222}
.defs{position:absolute;width:0;height:0}
svg{display:block}
.titlebar{height:18px;flex:none;display:flex;align-items:center;border-top:1px solid #4a5a70;background:linear-gradient(#9db8d6,#b7cfe6 90%);padding-left:3px}
.logo{width:14px;height:15px;background:#e8e8f0;border-top:2px solid #2040c0;text-align:center;font:bold 11px/13px "Liberation Sans",sans-serif;letter-spacing:0;color:#111}
.logo b{font-weight:bold}
.title-text{margin-left:4px;font:11px Roboto,sans-serif;color:#1a2230;letter-spacing:-.6px}
.winbtns{margin-left:auto;display:flex;margin-right:2px;gap:1px;height:15px;align-self:flex-start;margin-top:1px}
.wb{width:26px;height:15px;border:1px solid #5a7898;border-radius:2px;background:linear-gradient(#c8d8ea,#a0b8d0);display:flex;align-items:center;justify-content:center;color:#fff;font-size:10px}
.wb-close{background:linear-gradient(#e09080,#c04030);border-color:#803028;font-weight:bold}
.glyph-min{width:9px;height:3px;background:#fff;border:1px solid #456}
.glyph-max{width:9px;height:7px;background:#dde6f0;border:1px solid #456}
.menubar{height:16px;flex:none;display:flex;align-items:center;gap:10.1px;padding:0 0 1px 6px;background:linear-gradient(#fff 0 2px,#dfe5f6 4px);border-bottom:1px solid #9a9a9a;font:11px "Open Sans",sans-serif;color:#222;letter-spacing:-.5px}
.toolrow{height:28px;flex:none;display:flex;background:#f0f0f0;padding-left:3px;border-bottom:1px solid #e0e0e0}
.tg{display:flex;align-items:center;height:27px;padding-top:1px;border-left:1px solid #555;border-right:1px solid #aaa;border-bottom:1px solid #a8a8a8;margin-right:2px;flex:none}
.ic{width:18.4px;height:16px;flex:none;padding:0 1px;overflow:visible}
.ic-w{width:20px}
.ic-t{width:14px;padding:0}
.ic-on{background:#e4e4e4;outline:1px solid #c8c8c8;outline-offset:1px}
.ic-s{width:16px}
.caret{width:8px;height:16px;flex:none;position:relative}
.caret::after{content:"";position:absolute;left:1px;top:7px;border:3px solid transparent;border-top:3px solid #111;border-bottom:0}
.caret-off::after{border-top-color:#999}
.sep{width:9px;height:16px;flex:none;background:repeating-linear-gradient(#888 0 1px,transparent 1px 2px) center/1px 100% no-repeat}
.sep-s{width:4px}
.sep-l{width:14px}
.mlogo{width:18px;text-align:center;border-top:2px solid #2040c0;font:bold 12px/12px "Liberation Sans",sans-serif;letter-spacing:0;color:#111;margin-left:1px;padding-top:1px}
.tg-a{width:302px;padding-left:6px}
.tg-b{width:85px;padding-left:8px;margin-right:0}
.tg-c{width:350px;padding-left:12px;margin-right:3px}
.tg-d{width:133px;padding-left:8px}
.tg-e{width:178px;padding-left:12px;margin-right:2px}
.tg-f{width:269px;padding-left:5px;border-left:1px solid #a8a8a8;margin-right:3px}
.tg-g{width:125px;padding-left:8px;margin-right:2px}
.tg-h{width:111px;padding-left:7px;border-left:1px solid #a8a8a8;gap:3px}
.runlen{width:55px;height:19px;margin-left:4px;background:#fff;border:1px solid #bbb;text-align:right;padding-right:3px;font:9.500px/17px "Liberation Mono",monospace;letter-spacing:0;color:#333}
.spin{width:9px;height:19px;display:flex;flex-direction:column;justify-content:space-around;background:#eee;border:1px solid #999;margin-right:2px}
.spin svg{width:7px;height:7px}
.flip{transform:rotate(180deg)}
.lbl{margin-right:4px;color:#222;white-space:nowrap}
.tg-e .lbl{width:32px;margin:0}
.tg-f .lbl{width:62px;margin:0}
.off{color:#888}
.lbl.off{color:#777}
.combo{height:19px;background:#f0f0f0;border:1px solid #bbb;border-right-color:#fff;border-bottom-color:#fff;font:9.500px/17px "Liberation Mono",monospace;letter-spacing:0;padding-left:1px}
.c-layout{width:102px;color:#222}
.c-col{width:177px}
.c-search{width:99px;background:#f4f4f4}
.cbtn{width:15px;height:16px;margin-left:1px;border:1px solid #aaa;border-bottom-color:#666;border-right-color:#666;background:#f4f4f4;display:flex;align-items:center;justify-content:center;flex:none}
.cbtn svg{width:11px;height:8px}
.cbtn.off svg{opacity:.5}
.tg-i{width:141px;padding-left:10px;gap:3px}
.fbox{width:18px;height:18px;background:#fff;border:1px solid #bbb;text-align:center;color:#aaa;font:8px/16px "Liberation Sans",sans-serif;letter-spacing:0;flex:none}
.tg-j{width:95px;padding-left:8px;gap:3.300px}
.tg-k{width:129px;padding-left:11px;gap:3.300px}
.tg-k .sep{width:6px}
.tg-k .ic-on{background:#fbfbfb}
.tg-l{width:156px;padding-left:8px;gap:.4px}
.tg-m{width:299px;padding-left:11px;gap:1px}
.tg-m .caret{width:6px}
.tg-m .sep{width:6px;margin:0 3px}
.tg-m .lbl{margin-right:3px}
.tg-n{width:104px;padding-left:11px;gap:0}
.tg-o{width:159px;padding-left:11px;gap:4px}
.tg-o .sep{width:6px}
.workspace{height:676px;flex:none;display:flex;background:linear-gradient(#ebebeb 0 667px,#d4d4d4 667px)}
.col{display:flex;flex-direction:column;flex:none}
.col-sim{width:304px;padding-left:1px}
.col-mid{width:310px;padding-left:3px;gap:10px}
.col-wave{flex:1}
.panel{display:flex;flex-direction:column;background:#f0f0f0;min-height:0}
.panel-sim{height:667px;width:298px}
.panel-obj{height:328px;width:299px}
.panel-proc{height:329px;width:300px}
.panel-wave{height:667px}
.phead{height:17px;display:flex;align-items:center;flex:none;background:#f0f0f0;padding:0 2px}
.phead-on{background:linear-gradient(#a7c3df,#9ab8d8)}
.pi{width:15px;height:15px;flex:none;margin-right:1px}
.ptitle{color:#222;white-space:nowrap;margin:0 4px 0 2px;padding-top:1px}
.stripes{flex:1;height:7px;display:flex;align-items:center;min-width:0}
.stripes i{flex:1;height:7px;border-top:1px solid #a8a8a8;border-bottom:1px solid #a8a8a8;position:relative;background:linear-gradient(#fff,#fff) center/100% 1px no-repeat}
.stripes b{width:20px;height:9px;flex:none;background:radial-gradient(#777 35%,transparent 40%) 0 0/2.500px 2.500px}
.phead-on .stripes i{border-color:#2c5c80;background:linear-gradient(#eef6ff,#eef6ff) center/100% 1px no-repeat}
.phead-on .stripes b{background:radial-gradient(#dde,#dde 35%,transparent 40%) 0 0/2.500px 2.500px}
.pbtns{display:flex;gap:0;margin-left:3px;flex:none}
.pbtns span{width:12px;height:12px;border:1px solid #ddd;background:#fff;color:#111;font:bold 12px/10px "Liberation Sans",sans-serif;letter-spacing:0;text-align:center;display:block}
.pbtns .und{font:bold 9px/10px "DejaVu Sans",sans-serif}
.chead{height:15px;flex:none;display:grid;background:#f0f0f0;border-bottom:1px solid #999;color:#222;line-height:16px;white-space:nowrap;overflow:hidden}
.chead span{padding-left:2px;border-right:1px solid #aaa;overflow:hidden}
.fcell{display:flex;align-items:center;padding-left:1px}
.chead .fcell{padding-left:2px}
.tri{width:0;height:0;border:3px solid transparent;border-top:5px solid #444;border-bottom:0;margin-right:3px;flex:none}
.chead-sim,.row-sim{grid-template-columns:122px 59px 81px 36px}
.chead-obj,.row-obj{grid-template-columns:124px 36px 32px 36px 1fr}
.chead-proc{grid-template-columns:124px 86px 49px 36px 5px}
.pbody{flex:1;min-height:0;padding-top:1px;overflow:hidden}
.body-white{background:#fff}
.body-obj{background:#4f5b8b;color:#eef}
.body-proc{background:#8ba4fd}
.row{display:grid;height:14.200px;line-height:14px;white-space:nowrap;overflow:hidden}
.row>span{padding-left:2px;overflow:hidden}
.tree{display:flex;align-items:center;padding-left:0}
.row>.tree{padding-left:3px}
.row>.tree-n{padding-left:18px}
.row>.tree-o{padding-left:5px}
.row>.tree-on{padding-left:14px}
.pm{width:9px;height:9px;flex:none}
.conn{width:6px;height:1px;background:#777;flex:none}
.inst{width:10px;height:11px;margin-right:5px;flex:none}
.dia{width:13px;height:13px;flex:none;margin:0 5px 0 1px}
.row-obj>span:nth-child(2){padding-left:1px}
.hs{height:15px;display:flex;flex:none;background:#f4f4f4}
.sb{width:14px;height:15px;flex:none;background:#f0f0f0;border:1px solid #ccc;border-right-color:#888;border-bottom-color:#888;display:flex;align-items:center;justify-content:center}
.sb-v{width:14px;height:12px}
.trk{flex:1;background:#f7f7f7}
.thumb{background:#ececec;border:1px solid #ddd;border-bottom-color:#aaa;flex:none}
.ar-l{width:0;height:0;border:3px solid transparent;border-right:4px solid #111;border-left:0}
.ar-r{width:0;height:0;border:3px solid transparent;border-left:4px solid #111;border-right:0}
.ar-u{width:0;height:0;border:3px solid transparent;border-bottom:4px solid #111;border-top:0}
.ar-d{width:0;height:0;border:3px solid transparent;border-top:4px solid #111;border-bottom:0}
.hs-sim .thumb{width:133px}
.hs-proc{height:16px}
.hs-proc .thumb{width:138px}
.tabs{height:18px;flex:none;margin-top:1px;display:flex;border-top:1px solid #666;background:#f0f0f0;position:relative;align-items:stretch}
.tab{height:17px;display:flex;align-items:center;background:#c9c9c9;border:1px solid #555;border-top:0;border-radius:0 0 3px 3px;padding:0 2px;white-space:nowrap;flex:none}
.tab svg{width:13px;height:13px;margin-right:3px;flex:none}
.tab em{font-style:normal;color:#999;font-size:12px;margin-left:auto;padding-right:1px}
.tabs .tab:nth-child(1){width:65px}
.tabs .tab:nth-child(2){width:65px}
.tabs .tab:nth-child(3){width:49px}
.tabs-wave .tab:nth-child(1){width:59px}
.tabs-wave .tab:nth-child(2){width:105px}
.tab-on{background:#f0f0f0;margin-top:-1px;height:18px}
.tabnav{margin-left:auto;width:15px;height:14px;display:flex;align-items:center;justify-content:space-around;border:1px solid #bbb;background:#eee;margin-top:1px}
.tabnav i{border-right-color:#777;border-left-color:#777}
.panel-wave{background:#f4f4f4}
.wave-grid{display:grid;grid-template-columns:196px 78px 685px 14px;grid-template-rows:16px 556px 32px 16px;gap:2px;padding:2px 0 0 3px;flex:none;background:#f0f0f0}
.wtop{background:#808080;display:flex;align-items:center;color:#f0f0f0}
.wtop-name{padding-left:7px}
.wobj{width:15px;height:15px;margin-right:1px}
.wtop-msg{justify-content:flex-end;padding-right:6px}
.wtop-wave{background:#000}
.cursor-mark{display:block;width:3px;height:100%;margin-left:2px;background:#fc0}
.grey-cell{background:#808080}
.names{background:#808080;border-left:7px solid #fff}
.vals{background:#808080}
.sig{height:14.180px;display:flex;align-items:center;color:#eee;padding:1px 0 0 4px;white-space:nowrap;line-height:14px}
.sig-big{height:62.600px;padding-top:2px}
.sig span{margin-left:3px}
.dia-n{margin-left:15px}
.sig .conn{width:4px}
.sig .dia{margin-right:0;width:13px;height:13px}
.sig .dia-n{margin-left:14px}
.val{height:14.180px;color:#eee;padding:1px 0 0 2px;line-height:14px;white-space:nowrap;overflow:hidden}
.val-big{height:62.600px;line-height:62px;padding-top:2px}
.val-u{font-size:9.500px;letter-spacing:-.2px}
.val-n{letter-spacing:-.6px}
.divider{height:2px;background:#505050;margin:1px 5px 0 3px;border-bottom:1px solid #999}
.wave{width:685px;height:556px;background:#000;overflow:hidden}
.axis{width:685px;height:32px;background:#000;overflow:hidden}
.vs{display:flex;flex-direction:column;background:#f4f4f4}
.vthumb{flex:1;background:#f0f0f0;border:1px solid #e4e4e4}
.cur-name,.cur-val{background:#808080;display:flex;flex-direction:column;color:#eee}
.cur-now{height:18px;display:flex;align-items:center;justify-content:flex-end;padding-right:9px}
.cur-name .cur-now{padding-right:9px;justify-content:space-between;padding-left:4px}
.mini-ics{display:flex;gap:1px;margin-left:1px}
.mini-ics svg{width:10px;height:10px}
.cur-one{height:14px;display:flex;align-items:center;color:#222}
.mini-grey{margin-left:5px;margin-right:3px}
.cur-label{flex:1;background:#fff;text-align:right;padding-right:8px;height:14px;line-height:15px}
.cur-one-v{background:#fff;justify-content:flex-end;padding-right:9px}
.hs-fade .sb{opacity:.6}
.hs-val .thumb{width:3px}
.hs-main .thumb{flex:1;background:#f0f0f0;border-left:1px solid #f0d890}
.tabs-wave{margin-top:5px;height:17px}
.tabs-wave .tab{height:16px}
.tabs-wave .tab-on{height:17px}
.tabs-wave .tab svg{margin-left:1px}
.transcript{height:81px;flex:none;display:flex;flex-direction:column;background:#f0f0f0;padding:0 3px 0 1px}
.transcript .phead{height:15px}
.transcript .pi{width:13px;margin-right:0}
.tr-body{flex:1;display:flex;background:#fff;border-top:1px solid #333;border-left:1px solid #666;border-bottom:1px solid #ccc;min-height:0;margin-right:-3px}
.console{flex:1;margin:0;padding:2px 0 0 4px;font:9.400px/12.700px "Liberation Mono",monospace;letter-spacing:0;color:#222;white-space:pre}
.prompt{color:#2a2a9a}
.vs-tr{width:15px;flex:none}
.vs-tr .sb-v{height:15px}
.statusbar{height:19px;flex:none;display:flex;align-items:center;background:#f0f0f0;padding:0 15px 0 2px;gap:5px}
.st{height:16px;line-height:15px;background:#f0f0f0;border:1px solid #c0c0c0;border-bottom-color:#fff;border-right-color:#fff;padding-left:1px;white-space:nowrap;overflow:hidden;flex:none}
.st-1{width:141px;padding-left:6px}
.st-2{width:90px}
.st-3{width:163px}
.st-4{flex:1}
.taskbar{height:7px;flex:none;display:flex;gap:2px;padding-left:24px;background:linear-gradient(90deg,#a8c4e0 0 60%,#9ab6d2 72%,#6f87a0 100%);overflow:hidden}
.orb{width:20px;height:14px;border-radius:50%;background:#dfe8f0;border:1px solid #56708c;margin-right:107px;flex:none}
.task{width:50px;height:7px;background:linear-gradient(#dcebfa,#a8c4e0);border:1px solid #4d6680;border-bottom:0;border-radius:2px 2px 0 0;display:flex;justify-content:center;padding-top:2px}
.task i{width:14px;height:8px;border-radius:3px 3px 0 0}
.task-on{background:#e8f2fc}
.t-red{background:#d04030}
.t-green{background:#58b048}
.t-blue{background:#1c88d0}
.t-grey{background:#bcc8d4;border:1px solid #789}
.t-navy{background:#1414b8}
.wt{font:10px Roboto,"Liberation Sans",sans-serif;fill:#e8e8e8;letter-spacing:-.35px}
.wt-long{font-size:9.500px;letter-spacing:0}
.wt-ax{fill:#00c000;letter-spacing:-.7px}
.wt-cur{fill:#e6c000;letter-spacing:-.5px}
```
FILE: wave.js
```js
(function () {
  var NS = "http://www.w3.org/2000/svg";
  var svg = document.getElementById("wave");
  var axis = document.getElementById("axis");
  var X0 = 896, XE = 1546, STEP0 = 911.7, P = 16.93;
  var rowC = function (i) { return 196.7 + (i - 1) * 14.18; };
  var BUS = "#9ccf9c", CLK = "#00c400", CLK2 = "#00e000", GRID = "#7c7c7c";

  function el(parent, name, attrs, text) {
    var n = document.createElementNS(NS, name);
    for (var k in attrs) n.setAttribute(k, attrs[k]);
    if (text !== undefined) n.textContent = text;
    parent.appendChild(n);
    return n;
  }
  function path(d, stroke, w) {
    el(svg, "path", { d: d, fill: "none", stroke: stroke, "stroke-width": w || 1 });
  }
  function step(k) { return STEP0 + k * P; }
  function px(v) { return Math.round(v) + 0.5; }

  // grid
  for (var g = 1; g <= 10; g++) {
    var gx = px(X0 + g * 65);
    el(svg, "line", { x1: gx, x2: gx, y1: 127, y2: 683, stroke: GRID });
  }

  // analog sdata
  var lv = [166,143,123,108,95,85,76,76,76,85,95,108,122,143,166,185,208,231,250,265,280,290,298,298,298,290,280,265,250,231,208,185];
  var d = "M896 183.500H" + px(STEP0), k, x;
  for (k = 0; k < 38; k++) {
    var y = px(105 + lv[k % 32] / 3);
    d += "V" + y;
    x = Math.min(step(k + 1), XE);
    d += "H" + px(x);
  }
  path(d, "#a6cda6");

  function clock(i, color, w) {
    var c = rowC(i), hi = px(c - 5), lo = px(c + 5);
    var s = "M896 " + hi, level = 1;
    for (var t = -0.5; step(t) < XE; t += 0.5) {
      var xx = px(step(t));
      level = 1 - level;
      s += "H" + xx + "V" + (level ? hi : lo);
    }
    s += "H" + XE;
    path(s, color, w);
  }
  function reset(i) {
    var c = rowC(i), hi = px(c - 5), lo = px(c + 5);
    path("M898 " + hi + "H901.500V" + lo, "#e08020", 1.5);
    path("M901.500 " + hi + "V" + lo + "H" + XE, CLK2, 1);
  }
  function hex(a, b, c, color) {
    var t = px(c - 5), m = px(c), o = px(c + 5), s = 1.5;
    path("M" + a + " " + m + "L" + (a + s) + " " + t + "H" + (b - s) + "L" + b + " " + m + "L" + (b - s) + " " + o + "H" + (a + s) + "Z", color);
  }
  function bus(i, labels, red) {
    var c = rowC(i), m = c + 3.5;
    var a = X0, b;
    for (var k = -1; a < XE; k++) {
      b = Math.min(step(k + 1), XE);
      if (red && k === -1) {
        var t = px(c - 5), o = px(c + 5);
        path("M899 " + t + "H" + (b - 1.5) + "L" + b + " " + px(c) + "L" + (b - 1.5) + " " + o + "H899", "#ff1c1c");
      } else if (b < XE) {
        hex(a, b, c, BUS);
      } else {
        var t2 = px(c - 5), o2 = px(c + 5);
        path("M" + XE + " " + t2 + "H" + (a + 1.5) + "L" + a + " " + px(c) + "L" + (a + 1.5) + " " + o2 + "H" + XE, BUS);
      }
      if (labels && b < XE) {
        el(svg, "text", { x: a + (k === -1 ? 1.5 : 3.5), y: m, "class": "wt" }, String((k + 1) % 32));
      }
      a = b;
    }
  }
  function longbus(i, text) {
    var c = rowC(i);
    hex(X0, XE, c, BUS);
    el(svg, "text", { x: 898.5, y: c + 3.5, "class": "wt wt-long", textLength: 646, lengthAdjust: "spacing" }, text);
  }

  var dec = "{600} {873} {1136} {1378} {1590} {1764} {1893} {1973} {2000} {1973} {1893} {1764} {1590} {1378} {1136} {873} {600} {327} {64} {-178} {-390} {-564}...";
  var bin = "{001001011000} {001101101001} {010001110000} {010101100010} {011000110110} {011011100100} {011101100101} {011110110101} {011111010000} ...";

  clock(1, CLK, 1.7);
  reset(2); reset(3);
  clock(4, CLK2, 1);
  bus(5, false, true);
  bus(6, true, false);
  bus(7, false, true);
  longbus(8, dec);
  bus(9, false, true);
  clock(10, CLK, 1.7);
  reset(11); reset(12);
  clock(13, CLK2, 1);
  bus(14, false, true);
  bus(15, true, false);
  bus(16, false, true);
  longbus(17, bin);

  // cursor
  el(svg, "rect", { x: 896.5, y: 127, width: 3, height: 556, fill: "#ffcc00" });

  // axis
  function aEl(name, attrs, text) { return el(axis, name, attrs, text); }
  for (var t = 0; t <= 106; t++) {
    var ax = px(X0 + t * 6.5), major = t % 10 === 0;
    aEl("line", { x1: ax, x2: ax, y1: major ? 685 : 687, y2: 691, stroke: "#00c000" });
  }
  [["200000 ps", 1026], ["400000 ps", 1156], ["600000 ps", 1286], ["800000 ps", 1416], ["1000000 ps", 1546]].forEach(function (l) {
    aEl("text", { x: l[1], y: 701, "text-anchor": "middle", "class": "wt wt-ax" }, l[0]);
  });
  aEl("text", { x: 896, y: 701, "class": "wt wt-ax" }, "s");
  aEl("line", { x1: 895, x2: 1580, y1: 703.5, y2: 703.5, stroke: "#888" });
  aEl("rect", { x: 896.5, y: 685, width: 3, height: 18, fill: "#ffcc00" });
  aEl("rect", { x: 896.5, y: 704.5, width: 35, height: 12, fill: "#000", stroke: "#e6b000" });
  aEl("text", { x: 898, y: 714.5, "class": "wt wt-cur" }, "5000 ps");
})();
```
